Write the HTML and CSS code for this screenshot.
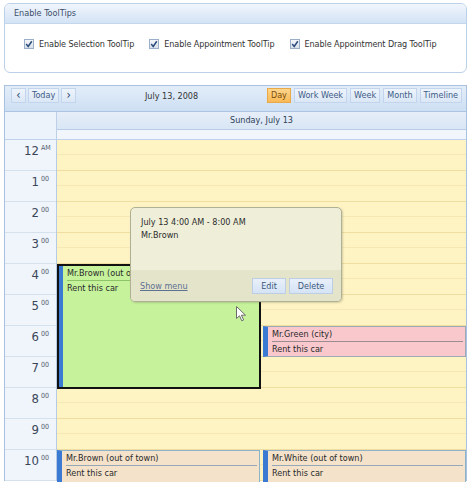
FILE: index.html
```html
<!DOCTYPE html>
<html>
<head>
<meta charset="utf-8">
<link rel="stylesheet" href="styles.css">
</head>
<body>
<div class="tt-panel">
  <div class="tt-head">Enable ToolTips</div>
  <div class="tt-body">
    <label class="chk"><span class="box"><svg width="8" height="8" viewBox="0 0 8 8"><path d="M1.2 4 L3.2 6.4 L6.8 1.2" fill="none" stroke="#2d4d7c" stroke-width="1.5"/></svg></span>Enable Selection ToolTip</label>
    <label class="chk"><span class="box"><svg width="8" height="8" viewBox="0 0 8 8"><path d="M1.2 4 L3.2 6.4 L6.8 1.2" fill="none" stroke="#2d4d7c" stroke-width="1.5"/></svg></span>Enable Appointment ToolTip</label>
    <label class="chk"><span class="box"><svg width="8" height="8" viewBox="0 0 8 8"><path d="M1.2 4 L3.2 6.4 L6.8 1.2" fill="none" stroke="#2d4d7c" stroke-width="1.5"/></svg></span>Enable Appointment Drag ToolTip</label>
  </div>
</div>

<div class="sched">
  <div class="toolbar">
    <div class="nav">
      <span class="btn arrow">&lsaquo;</span>
      <span class="btn">Today</span>
      <span class="btn arrow">&rsaquo;</span>
    </div>
    <div class="date">July 13, 2008</div>
    <div class="views">
      <span class="btn active">Day</span>
      <span class="btn">Work Week</span>
      <span class="btn">Week</span>
      <span class="btn">Month</span>
      <span class="btn">Timeline</span>
    </div>
  </div>
  <div class="head-row">
    <div class="corner"></div>
    <div class="day-head">
      <div class="day-title">Sunday, July 13</div>
      <div class="allday"></div>
    </div>
  </div>
  <div class="grid">
    <div class="times">
      <div class="hour"><span class="h">12</span><span class="m">AM</span></div>
      <div class="hour"><span class="h">1</span><span class="m">00</span></div>
      <div class="hour"><span class="h">2</span><span class="m">00</span></div>
      <div class="hour"><span class="h">3</span><span class="m">00</span></div>
      <div class="hour"><span class="h">4</span><span class="m">00</span></div>
      <div class="hour"><span class="h">5</span><span class="m">00</span></div>
      <div class="hour"><span class="h">6</span><span class="m">00</span></div>
      <div class="hour"><span class="h">7</span><span class="m">00</span></div>
      <div class="hour"><span class="h">8</span><span class="m">00</span></div>
      <div class="hour"><span class="h">9</span><span class="m">00</span></div>
      <div class="hour"><span class="h">10</span><span class="m">00</span></div>
    </div>
    <div class="day">
      <div class="slot"><i></i><i></i></div>
      <div class="slot"><i></i><i></i></div>
      <div class="slot"><i></i><i></i></div>
      <div class="slot"><i></i><i></i></div>
      <div class="slot"><i></i><i></i></div>
      <div class="slot"><i></i><i></i></div>
      <div class="slot"><i></i><i></i></div>
      <div class="slot"><i></i><i></i></div>
      <div class="slot"><i></i><i></i></div>
      <div class="slot"><i></i><i></i></div>
      <div class="slot"><i></i><i></i></div>

      <div class="appt green selected a-brown1">
        <div class="appt-title">Mr.Brown (out of town)</div>
        <div class="appt-subj">Rent this car</div>
      </div>
      <div class="appt pink a-green">
        <div class="appt-title">Mr.Green (city)</div>
        <div class="appt-subj">Rent this car</div>
      </div>
      <div class="appt beige a-brown2">
        <div class="appt-title">Mr.Brown (out of town)</div>
        <div class="appt-subj">Rent this car</div>
      </div>
      <div class="appt beige a-white">
        <div class="appt-title">Mr.White (out of town)</div>
        <div class="appt-subj">Rent this car</div>
      </div>

      <div class="tooltip">
        <div class="tip-main">
          <div class="tip-time">July 13 4:00 AM - 8:00 AM</div>
          <div class="tip-subj">Mr.Brown</div>
        </div>
        <div class="tip-foot">
          <a class="tip-link">Show menu</a>
          <div class="tip-btns">
            <span class="tbtn">Edit</span>
            <span class="tbtn">Delete</span>
          </div>
        </div>
      </div>

      <svg class="cursor" width="11" height="16" viewBox="0 0 11 16"><path d="M0.5 0.5 L0.5 12.5 L3.5 9.8 L5.8 14.8 L7.6 14 L5.4 9.2 L9.5 9.2 Z" fill="#ffffff" stroke="#6b6b6b" stroke-width="1"/></svg>
    </div>
  </div>
</div>
</body>
</html>
```

FILE: styles.css
```css
html, body {
  margin: 0;
  padding: 0;
  background: #ffffff;
  height: 482px;
  overflow: hidden;
}
body {
  font-family: "DejaVu Sans Condensed", "DejaVu Sans", sans-serif;
  font-size: 9px;
  color: #2b2b2b;
}

/* ---------- tooltip options panel ---------- */
.tt-panel {
  margin: 3px 0 0 4px;
  width: 461px;
  height: 68px;
  border: 1px solid #bcd0e8;
  border-radius: 6px;
  overflow: hidden;
}
.tt-head {
  height: 19px;
  line-height: 19px;
  padding-left: 9px;
  color: #3b4e68;
  background: linear-gradient(#f0f5fc, #d4e3f6);
  border-bottom: 1px solid #c4d6ec;
}
.tt-body {
  display: flex;
  gap: 15px;
  padding: 15px 0 0 19px;
  letter-spacing: -0.1px;
}
.chk {
  display: flex;
  align-items: center;
  gap: 5px;
  color: #333333;
}
.box {
  width: 8px;
  height: 8px;
  border: 1px solid #9aaec8;
  background: linear-gradient(#f4f6f9, #d9e0ea);
  display: flex;
}

/* ---------- scheduler ---------- */
.sched {
  margin: 12px 0 0 4px;
  width: 461px;
  border: 1px solid #a9c0de;
  border-bottom: none;
}
.toolbar {
  height: 26px;
  display: flex;
  align-items: flex-start;
  padding: 2px 4px 0 6px;
  box-sizing: border-box;
  background: linear-gradient(#e3edf9, #cddff3);
  border-bottom: 1px solid #aec5e2;
}
.nav, .views {
  display: flex;
  gap: 2px;
}
.views { gap: 3px; }
.btn {
  height: 13px;
  line-height: 13px;
  padding: 0 3px;
  border: 1px solid #c3d5ec;
  background: linear-gradient(#eef4fc, #dbe7f6);
  color: #3e5c86;
  font-size: 9px;
}
.btn.arrow {
  width: 9px;
  padding: 0 2px;
  text-align: center;
  font-size: 12px;
  line-height: 12px;
  color: #2f4a70;
}
.btn.active {
  background: linear-gradient(#fdd58b, #f8b956);
  border-color: #eaa949;
  color: #7b4d0c;
}
.date {
  flex: 1;
  text-align: center;
  line-height: 17px;
  color: #333333;
}

.head-row {
  display: flex;
  height: 27px;
  border-bottom: 1px solid #c0d2ea;
}
.corner {
  width: 51px;
  background: #edf3fb;
  border-right: 1px solid #bdd0e8;
}
.day-head {
  flex: 1;
  display: flex;
  flex-direction: column;
}
.day-title {
  height: 17px;
  line-height: 17px;
  text-align: center;
  background: linear-gradient(#e6eef9, #d9e6f5);
  border-bottom: 1px solid #b8cce6;
  color: #2f3f55;
}
.allday {
  flex: 1;
  background: #f1f6fc;
}

.grid {
  display: flex;
}
.times {
  width: 51px;
  background: #f0f5fc;
  border-right: 1px solid #b6cae4;
}
.hour {
  height: 31px;
  box-sizing: border-box;
  border-bottom: 1px solid #d6e1ee;
  display: flex;
  justify-content: flex-end;
  align-items: flex-start;
  padding: 4px 6px 0 0;
  color: #3a4658;
}
.hour .h {
  font-size: 13px;
  line-height: 14px;
}
.hour .m {
  font-size: 7px;
  line-height: 8px;
  margin-left: 2px;
  width: 9px;
  color: #55606f;
}

.day {
  flex: 1;
  position: relative;
  background: #fef3c3;
}
.slot {
  height: 31px;
  display: flex;
  flex-direction: column;
}
.slot i {
  display: block;
  box-sizing: border-box;
}
.slot i:first-child {
  height: 15px;
  border-bottom: 1px solid #f6e8b4;
}
.slot i:last-child {
  height: 16px;
  border-bottom: 1px solid #efdea0;
}

/* appointments */
.appt {
  position: absolute;
  box-sizing: border-box;
  border: 1px solid #93aec6;
  border-left: 5px solid #3a7ad3;
  padding: 0 2px 0 4px;
  color: #2a2a2a;
  overflow: hidden;
}
.appt-title {
  height: 14px;
  line-height: 14px;
  border-bottom: 1px solid #8fa6bb;
  white-space: nowrap;
}
.appt-subj {
  line-height: 15px;
}
.green { background: #c6f29c; }
.green .appt-title { border-bottom-color: #8cc467; }
.pink { background: #f8c8cc; border-color: #9ea9b6; border-left-color: #3a7ad3; }
.pink .appt-title { border-bottom-color: #9a8c90; }
.beige { background: #f4e2ca; border-color: #8eb2c9; border-left-color: #3a7ad3; }
.beige .appt-title { border-bottom-color: #94a8b8; }
.selected {
  border: 2px solid #111111;
  border-left: 2px solid #111111;
  box-shadow: inset 4px 0 0 #3a7ad3;
  padding-left: 8px;
}

.a-brown1 { left: 0; top: 124px; width: 204px; height: 125px; }
.a-green  { left: 206px; top: 186px; width: 203px; height: 31px; }
.a-brown2 { left: 0; top: 310px; width: 203px; height: 62px; }
.a-white  { left: 206px; top: 310px; width: 203px; height: 62px; }

/* tooltip */
.tooltip {
  position: absolute;
  left: 73px;
  top: 67px;
  width: 212px;
  height: 95px;
  box-sizing: border-box;
  border: 1px solid #b0b094;
  border-radius: 5px;
  background: #efefd9;
  box-shadow: 1px 1px 2px rgba(90, 90, 60, 0.25);
  display: flex;
  flex-direction: column;
  overflow: hidden;
}
.tip-main {
  flex: 1;
  padding: 8px 10px 0 10px;
  color: #2c2c2c;
}
.tip-time { line-height: 13px; }
.tip-subj { line-height: 13px; }
.tip-foot {
  height: 31px;
  background: #e4e4cb;
  display: flex;
  align-items: center;
  justify-content: space-between;
  padding: 0 8px 0 9px;
}
.tip-link {
  color: #5d7190;
  text-decoration: underline;
}
.tip-btns {
  display: flex;
  gap: 3px;
}
.tbtn {
  height: 14px;
  line-height: 14px;
  padding: 0 6px;
  border: 1px solid #bccde4;
  background: linear-gradient(#e8f0fa, #d5e3f5);
  color: #3d577c;
}
.tbtn:first-child { width: 20px; text-align: center; }
.tbtn:last-child { width: 30px; text-align: center; }

.cursor {
  position: absolute;
  left: 179px;
  top: 166px;
}
```
